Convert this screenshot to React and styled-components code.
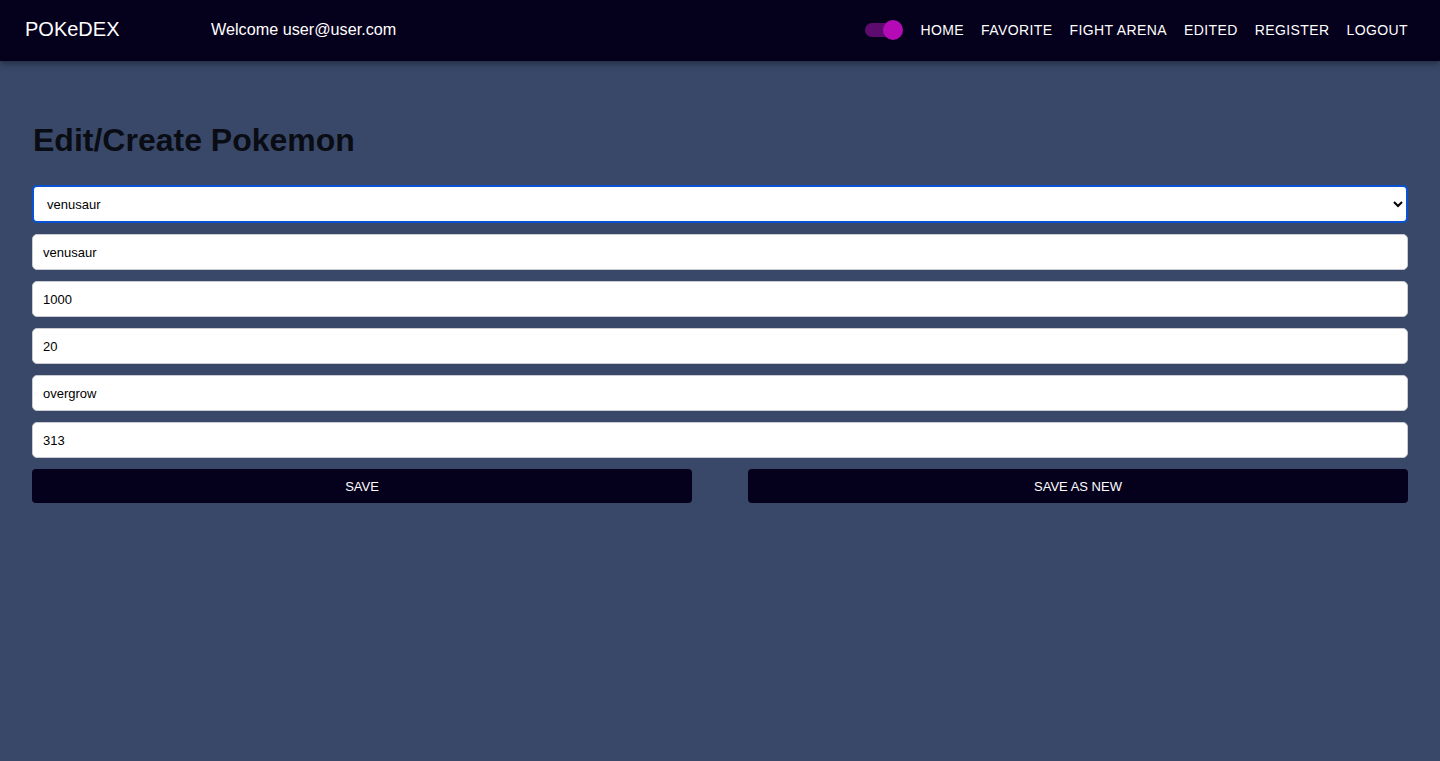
import styled, { createGlobalStyle } from "styled-components";

const GlobalStyle = createGlobalStyle`
  html, body {
    margin: 0;
    background: #394868;
    font-family: "Liberation Sans", Arial, sans-serif;
  }
  #root {
    min-height: 100vh;
  }
`;

const links = ["HOME", "FAVORITE", "FIGHT ARENA", "EDITED", "REGISTER", "LOGOUT"];

const fields = ["venusaur", "1000", "20", "overgrow", "313"];

export default function App() {
  return (
    <>
      <GlobalStyle />
      <Header>
        <Brand>POKeDEX</Brand>
        <Welcome>Welcome user@user.com</Welcome>
        <Nav>
          <Toggle>
            <Track />
            <Thumb />
          </Toggle>
          {links.map((link) => (
            <NavLink key={link}>{link}</NavLink>
          ))}
        </Nav>
      </Header>
      <Main>
        <Title>Edit/Create Pokemon</Title>
        <Form>
          <Select defaultValue="venusaur">
            <option value="venusaur">venusaur</option>
            <option value="bulbasaur">bulbasaur</option>
            <option value="ivysaur">ivysaur</option>
          </Select>
          {fields.map((value, i) => (
            <Input key={i} defaultValue={value} />
          ))}
          <Buttons>
            <Button type="button">SAVE</Button>
            <Button type="button">SAVE AS NEW</Button>
          </Buttons>
        </Form>
      </Main>
    </>
  );
}

const Header = styled.header`
  height: 61px;
  box-sizing: border-box;
  padding: 0 32px 2px 25px;
  background: #05001c;
  display: flex;
  align-items: center;
  box-shadow: 0 2px 4px -1px rgba(0, 0, 0, 0.2), 0 4px 5px 0 rgba(0, 0, 0, 0.14),
    0 1px 10px 0 rgba(0, 0, 0, 0.12);
  color: #fff;
`;

const Brand = styled.div`
  font-size: 20px;
  width: 186px;
`;

const Welcome = styled.div`
  font-size: 16.2px;
`;

const Nav = styled.nav`
  margin-left: auto;
  display: flex;
  align-items: center;
  gap: 17px;
`;

const Toggle = styled.div`
  position: relative;
  width: 38px;
  height: 20px;
  display: flex;
  align-items: center;
`;

const Track = styled.div`
  width: 30px;
  height: 14px;
  border-radius: 7px;
  background: #5d0b6e;
`;

const Thumb = styled.div`
  position: absolute;
  right: 0;
  top: 0;
  width: 20px;
  height: 20px;
  border-radius: 50%;
  background: #b40bb7;
`;

const NavLink = styled.span`
  font-size: 14px;
  letter-spacing: 0.4px;
  color: #fff;
  cursor: pointer;
`;

const Main = styled.main`
  padding: 61px 32px 0;
`;

const Title = styled.h1`
  margin: 0 0 26px 1px;
  font-size: 32px;
  font-weight: bold;
  line-height: 37px;
  color: #0a0c14;
`;

const Form = styled.form`
  display: flex;
  flex-direction: column;
  gap: 11px;
`;

const Select = styled.select`
  height: 38px;
  padding: 0 8px 0 9px;
  font-family: "Liberation Sans", Arial, sans-serif;
  font-size: 13px;
  color: #000;
  background: #fff;
  border: 2px solid #0a52d4;
  border-radius: 5px;
  outline: none;
`;

const Input = styled.input`
  height: 36px;
  box-sizing: border-box;
  padding: 0 10px;
  font-family: "Liberation Sans", Arial, sans-serif;
  font-size: 13px;
  color: #000;
  background: #fff;
  border: 1px solid #c9cbd0;
  border-radius: 5px;
  outline: none;
`;

const Buttons = styled.div`
  display: grid;
  grid-template-columns: 1fr 1fr;
  gap: 56px;
`;

const Button = styled.button`
  height: 34px;
  border: none;
  border-radius: 4px;
  background: #05001c;
  color: #fff;
  font-family: "Liberation Sans", Arial, sans-serif;
  font-size: 13px;
  cursor: pointer;
`;
